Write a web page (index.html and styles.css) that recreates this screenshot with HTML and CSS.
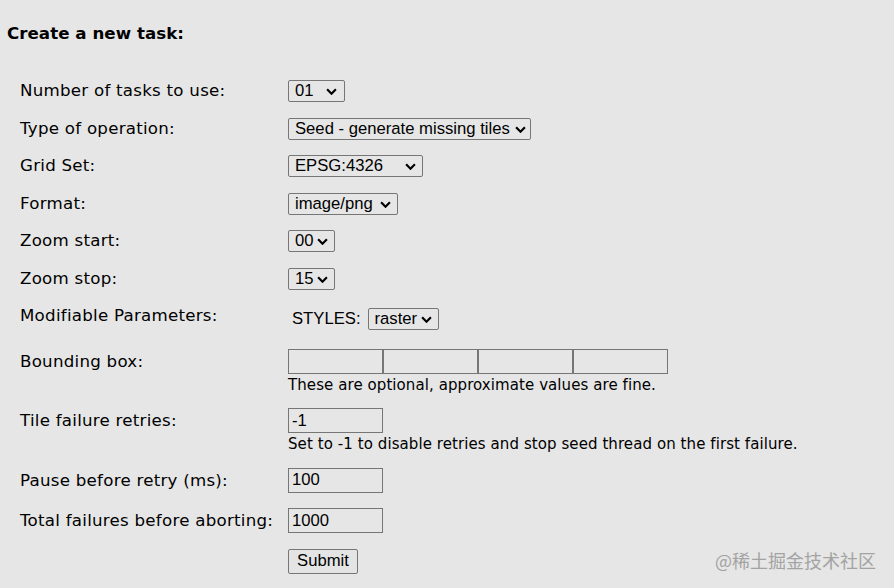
FILE: index.html
```html
<!DOCTYPE html>
<html lang="en">
<head>
<meta charset="utf-8">
<title>Create a new task</title>
<link rel="stylesheet" href="styles.css">
</head>
<body>
<div class="page">
  <h3 class="title">Create a new task:</h3>
  <form class="form">
    <div class="label">Number of tasks to use:</div>
    <div class="control">
      <span class="sel w57"><select><option>01</option></select><svg class="chev" viewBox="0 0 10 6"><path d="M1 1 L5 5 L9 1"/></svg></span>
    </div>

    <div class="label">Type of operation:</div>
    <div class="control">
      <span class="sel w243"><select><option>Seed - generate missing tiles</option></select><svg class="chev" viewBox="0 0 10 6"><path d="M1 1 L5 5 L9 1"/></svg></span>
    </div>

    <div class="label">Grid Set:</div>
    <div class="control">
      <span class="sel w135"><select><option>EPSG:4326</option></select><svg class="chev" viewBox="0 0 10 6"><path d="M1 1 L5 5 L9 1"/></svg></span>
    </div>

    <div class="label">Format:</div>
    <div class="control">
      <span class="sel w110"><select><option>image/png</option></select><svg class="chev" viewBox="0 0 10 6"><path d="M1 1 L5 5 L9 1"/></svg></span>
    </div>

    <div class="label">Zoom start:</div>
    <div class="control">
      <span class="sel w47"><select><option>00</option></select><svg class="chev" viewBox="0 0 10 6"><path d="M1 1 L5 5 L9 1"/></svg></span>
    </div>

    <div class="label">Zoom stop:</div>
    <div class="control">
      <span class="sel w47"><select><option>15</option></select><svg class="chev" viewBox="0 0 10 6"><path d="M1 1 L5 5 L9 1"/></svg></span>
    </div>

    <div class="label">Modifiable Parameters:</div>
    <div class="control params">
      <span class="param-name">STYLES:</span>
      <span class="sel w71"><select><option>raster</option></select><svg class="chev" viewBox="0 0 10 6"><path d="M1 1 L5 5 L9 1"/></svg></span>
    </div>

    <div class="label tall">Bounding box:</div>
    <div class="control">
      <div class="bbox"><input type="text" class="txt"><input type="text" class="txt"><input type="text" class="txt"><input type="text" class="txt"></div>
      <div class="hint">These are optional, approximate values are fine.</div>
    </div>

    <div class="label tall">Tile failure retries:</div>
    <div class="control">
      <input type="text" class="txt" value="-1">
      <div class="hint">Set to -1 to disable retries and stop seed thread on the first failure.</div>
    </div>

    <div class="label tall">Pause before retry (ms):</div>
    <div class="control">
      <input type="text" class="txt" value="100">
    </div>

    <div class="label tall">Total failures before aborting:</div>
    <div class="control">
      <input type="text" class="txt" value="1000">
    </div>

    <div class="label tall"></div>
    <div class="control">
      <button type="button" class="btn">Submit</button>
    </div>
  </form>
</div>
<div class="watermark">@稀土掘金技术社区</div>
</body>
</html>
```

FILE: styles.css
```css
html, body {
  margin: 0;
  padding: 0;
}
body {
  background: #e6e6e6;
  color: #000;
  font-family: "DejaVu Sans", Verdana, sans-serif;
  font-size: 15px;
  width: 894px;
  height: 588px;
  position: relative;
  overflow: hidden;
}
.page {
  padding-left: 7px;
}
.title {
  margin: 0;
  padding-top: 25px;
  font-size: 16.67px;
  line-height: 18px;
  font-weight: bold;
  letter-spacing: 0.04px;
}
.form {
  margin-top: 37px;
  padding-left: 13px;
  display: grid;
  grid-template-columns: 268px auto;
  row-gap: 15.5px;
  align-items: start;
}
.label {
  font-size: 16.67px;
  letter-spacing: 0.25px;
  line-height: 22px;
  white-space: nowrap;
}
.label.tall {
  line-height: 25px;
}
.control {
  display: flex;
  flex-direction: column;
  align-items: flex-start;
}
.params {
  flex-direction: row;
  align-items: center;
  padding: 2.5px 0 3.5px 4px;
  gap: 7px;
}
.param-name {
  font-family: "Liberation Sans", Arial, sans-serif;
  font-size: 16.67px;
  line-height: 22px;
}
.sel {
  position: relative;
  display: block;
  height: 22px;
}
.sel select {
  -webkit-appearance: none;
  appearance: none;
  display: block;
  box-sizing: border-box;
  width: 100%;
  height: 22px;
  margin: 0;
  padding: 0 0 0 6px;
  border: 1px solid #767676;
  border-radius: 2px;
  background: transparent;
  color: #000;
  font-family: "Liberation Sans", Arial, sans-serif;
  font-size: 16.67px;
  line-height: 20px;
}
.chev {
  position: absolute;
  right: 7px;
  top: 8px;
  width: 11px;
  height: 7px;
  pointer-events: none;
  fill: none;
  stroke: #000;
  stroke-width: 2;
}
.w57 { width: 57px; }
.w57 .chev { right: 8px; }
.w243 { width: 243px; }
.w243 .chev { right: 5px; }
.w135 { width: 135px; }
.w110 { width: 110px; }
.w47 { width: 47px; }
.w71 { width: 71px; }
.bbox {
  display: flex;
}
.txt {
  display: block;
  box-sizing: border-box;
  width: 95px;
  height: 25px;
  margin: 0;
  padding: 0 3px;
  border: 1px solid #767676;
  border-radius: 0;
  background: transparent;
  color: #000;
  font-family: "Liberation Sans", Arial, sans-serif;
  font-size: 16.67px;
  outline: none;
}
.hint {
  padding-top: 2px;
  margin-bottom: -1px;
  line-height: 18px;
  letter-spacing: 0.08px;
  white-space: nowrap;
}
.btn {
  box-sizing: border-box;
  width: 70px;
  height: 25px;
  margin: 0;
  padding: 0;
  border: 1px solid #767676;
  border-radius: 2px;
  background: #e4e4e4;
  color: #000;
  font-family: "Liberation Sans", Arial, sans-serif;
  font-size: 16.67px;
}
.watermark {
  position: absolute;
  right: 18px;
  top: 548px;
  font-family: "Noto Sans CJK SC", sans-serif;
  font-size: 18px;
  line-height: 24px;
  color: #a3a3a3;
  white-space: nowrap;
}
```
